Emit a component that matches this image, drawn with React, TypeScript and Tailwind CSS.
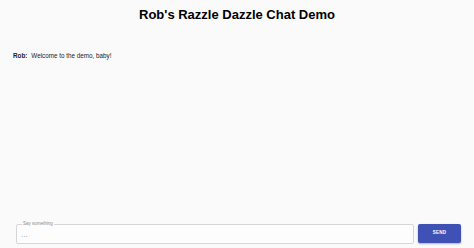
import { useState } from "react";

export default function App() {
  const [text, setText] = useState("");
  const messages = [{ user: "Rob", body: "Welcome to the demo, baby!" }];

  return (
    <div className="flex h-[248px] w-[474px] flex-col bg-[#fafafa] font-['Liberation_Sans',Arial,sans-serif] text-black">
      <h1 className="pt-[7px] text-center text-[13px] font-bold leading-[16px]">
        Rob's Razzle Dazzle Chat Demo
      </h1>

      <div className="flex-1 px-[13px] pt-[29px]">
        {messages.map((m, i) => (
          <p key={i} className="text-[6.3px] leading-[8px] text-[#222]">
            <span className="mr-[4px] font-bold">{m.user}:</span>
            {m.body}
          </p>
        ))}
      </div>

      <form
        className="flex items-center gap-[4px] pb-[4px] pl-[16px] pr-[13px]"
        onSubmit={(e) => {
          e.preventDefault();
          setText("");
        }}
      >
        <fieldset className="h-[22px] min-w-0 flex-1 rounded-[2px] border border-[#d6d6d6] bg-[#fdfdfd] px-[4px]">
          <legend className="ml-[1px] px-[1px] text-[4.5px] leading-[4px] text-[#8a8a8a]">
            Say something
          </legend>
          <input
            value={text}
            onChange={(e) => setText(e.target.value)}
            placeholder="..."
            className="mt-[4px] block h-[9px] w-full bg-transparent p-0 text-[8px] leading-[9px] text-[#333] outline-none placeholder:text-[#999]"
          />
        </fieldset>
        <button
          type="submit"
          className="h-[19px] w-[43px] rounded-[2px] bg-[#3f51b5] text-[4.5px] font-bold tracking-[0.2px] text-white shadow-[0_1px_2px_rgba(0,0,0,0.3)]"
        >
          SEND
        </button>
      </form>
    </div>
  );
}
